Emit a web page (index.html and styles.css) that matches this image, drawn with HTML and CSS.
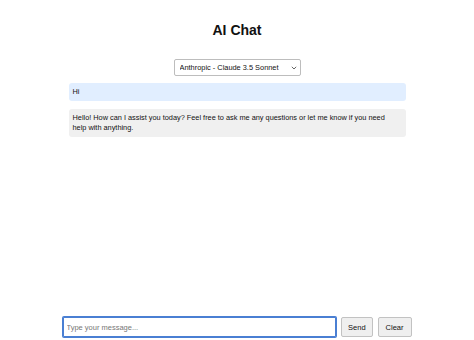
FILE: index.html
```
<!DOCTYPE html>
<html lang="en">
<head>
<meta charset="utf-8">
<title>AI Chat</title>
<link rel="stylesheet" href="styles.css">
</head>
<body>
<div class="app">
  <h1 class="title">AI Chat</h1>
  <div class="model-row">
    <div class="select-wrap">
      <select class="model-select">
        <option>Anthropic - Claude 3.5 Sonnet</option>
      </select>
      <svg class="chevron" width="6" height="4" viewBox="0 0 6 4"><path d="M0.8 0.8 L3 3 L5.2 0.8" fill="none" stroke="#555" stroke-width="0.9"/></svg>
    </div>
  </div>
  <div class="chat">
    <div class="msg user">Hi</div>
    <div class="msg bot">Hello! How can I assist you today? Feel free to ask me any questions or let me know if you need help with anything.</div>
  </div>
  <div class="input-row">
    <input class="msg-input" type="text" placeholder="Type your message..." autofocus>
    <button class="btn">Send</button>
    <button class="btn">Clear</button>
  </div>
</div>
</body>
</html>
```
FILE: styles.css
```
html, body {
  margin: 0;
  padding: 0;
  background: #fff;
}
body {
  font-family: "Liberation Sans", Arial, sans-serif;
  font-size: 7.5px;
  color: #111;
}
.app {
  width: 349px;
  height: 340px;
  margin: 0 auto;
  display: flex;
  flex-direction: column;
  box-sizing: border-box;
}
.title {
  margin: 22px 0 0;
  font-size: 14px;
  line-height: 16px;
  font-weight: bold;
  text-align: center;
}
.model-row {
  margin-top: 21px;
  display: flex;
  justify-content: center;
}
.select-wrap {
  position: relative;
  width: 127px;
  height: 17px;
}
.model-select {
  -webkit-appearance: none;
  appearance: none;
  width: 127px;
  height: 17px;
  margin: 0;
  padding: 0 0 0 5px;
  border: 1px solid #bdbdbd;
  border-radius: 2px;
  background: #fff;
  font-family: "Liberation Sans", Arial, sans-serif;
  font-size: 7.4px;
  color: #111;
  box-sizing: border-box;
}
.chevron {
  position: absolute;
  right: 4px;
  top: 7px;
}
.chat {
  flex: 1;
  margin-top: 7px;
  padding: 0 6px 0 6px;
  display: flex;
  flex-direction: column;
  gap: 8px;
}
.msg {
  padding: 4px 12px 4px 4px;
  line-height: 10px;
  border-radius: 3px;
  font-size: 7.35px;
}
.user {
  background: #e1eeff;
}
.bot {
  background: #f0f0f0;
}
.input-row {
  display: flex;
  gap: 5px;
  margin-bottom: 3px;
  height: 20px;
}
.msg-input {
  flex: 1;
  margin: 0;
  padding: 0 3px;
  border: 1px solid #4a7fd3;
  box-shadow: 0 0 0 1px #4a7fd3;
  border-radius: 1px;
  outline: none;
  font-family: "Liberation Sans", Arial, sans-serif;
  font-size: 7.5px;
  box-sizing: border-box;
  height: 20px;
}
.msg-input::placeholder {
  color: #777;
}
.btn {
  margin: 0;
  padding: 0 6px;
  height: 20px;
  border: 1px solid #c2c2c2;
  border-radius: 2px;
  background: #efefef;
  font-family: "Liberation Sans", Arial, sans-serif;
  font-size: 7.5px;
  color: #111;
}
.btn + .btn {
  padding: 0 7px;
}
```
